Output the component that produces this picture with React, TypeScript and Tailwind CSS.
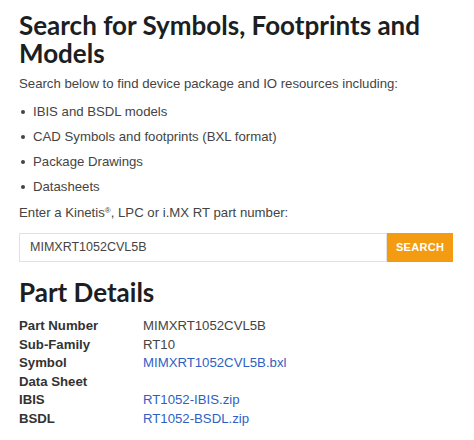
import React from 'react'

const rows: { label: string; value?: string; link?: boolean }[] = [
  { label: 'Part Number', value: 'MIMXRT1052CVL5B' },
  { label: 'Sub-Family', value: 'RT10' },
  { label: 'Symbol', value: 'MIMXRT1052CVL5B.bxl', link: true },
  { label: 'Data Sheet' },
  { label: 'IBIS', value: 'RT1052-IBIS.zip', link: true },
  { label: 'BSDL', value: 'RT1052-BSDL.zip', link: true },
]

const items = [
  'IBIS and BSDL models',
  'CAD Symbols and footprints (BXL format)',
  'Package Drawings',
  'Datasheets',
]

export default function App() {
  return (
    <div className="w-[474px] h-[440px] bg-white px-[19px] pt-[11px] text-[#333] font-['Liberation_Sans',Arial,sans-serif] overflow-hidden">
      <h1 className="font-['Lato',sans-serif] font-bold text-[26px] leading-[28px] text-[#1b1e22]">
        Search for Symbols, Footprints and Models
      </h1>
      <p className="mt-[7px] text-[13.2px] leading-[20px] text-[#444]">
        Search below to find device package and IO resources including:
      </p>
      <ul className="mt-[5px] text-[13.2px] text-[#444]">
        {items.map((t) => (
          <li key={t} className="flex items-center h-[25px]">
            <span className="w-[4px] h-[4px] rounded-full bg-[#444] ml-[2px] mr-[8px]" />
            {t}
          </li>
        ))}
      </ul>
      <p className="mt-[4px] text-[13.2px] leading-[20px] text-[#444]">
        Enter a Kinetis<sup className="text-[8px]">®</sup>, LPC or i.MX RT part number:
      </p>
      <div className="mt-[10px] flex h-[29px] w-[434px]">
        <input
          readOnly
          value="MIMXRT1052CVL5B"
          className="flex-1 border border-[#e2e2e2] px-[10px] text-[12.5px] text-[#444] outline-none"
        />
        <button className="w-[66px] bg-[#f39c12] text-white text-[11px] font-bold tracking-[0.3px]">
          SEARCH
        </button>
      </div>
      <h2 className="mt-[15px] font-['Lato',sans-serif] font-bold text-[26px] leading-[31px] text-[#1b1e22]">
        Part Details
      </h2>
      <div className="mt-[9px] text-[13.2px] leading-[18.6px]">
        {rows.map((r) => (
          <div key={r.label} className="flex">
            <span className="w-[124px] font-bold text-[#333]">{r.label}</span>
            {r.value && (
              <span className={r.link ? 'text-[#2f5fc4]' : 'text-[#444]'}>{r.value}</span>
            )}
          </div>
        ))}
      </div>
    </div>
  )
}
